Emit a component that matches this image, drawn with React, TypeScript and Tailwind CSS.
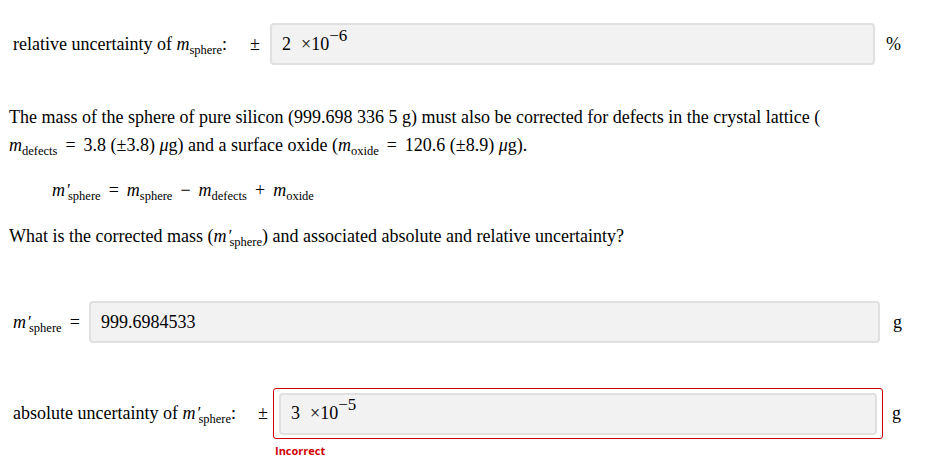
import React from 'react';

function M({ sub, prime }: { sub: string; prime?: boolean }) {
  return (
    <span className="whitespace-nowrap">
      <span className="italic">m</span>
      {prime && <span className="inline-block w-[3px] relative -top-[1px] left-[1px] text-[17px] italic">′</span>}
      <sub className="text-[12.5px] relative top-[4px]">{sub}</sub>
    </span>
  );
}

function Op({ c }: { c: string }) {
  return <span className="mx-[8px]">{c}</span>;
}

function Sci({ n, e }: { n: string; e: string }) {
  return (
    <span className="text-[18px]">
      {n}
      <span className="ml-[10px]">×10</span>
      <sup className="text-[17px] relative -top-[9px]">−{e}</sup>
    </span>
  );
}

function Box({ children, w }: { children: React.ReactNode; w: string }) {
  return (
    <div className={`${w} h-[42px] bg-[#f2f2f2] border-2 border-[#e0e0e0] rounded-[4px] flex items-center pl-[10px]`}>
      {children}
    </div>
  );
}

export default function App() {
  return (
    <div className="w-[925px] h-[457px] bg-white text-black font-['Liberation_Serif',serif] text-[18px] overflow-hidden">
      <div className="flex items-center pt-[23px] pl-[13px]">
        <span className="w-[237px]">
          relative uncertainty of <M sub="sphere" />:
        </span>
        <span className="w-[20px]">±</span>
        <Box w="w-[605px]">
          <Sci n="2" e="6" />
        </Box>
        <span className="ml-[11px]">%</span>
      </div>

      <div className="pl-[9px] mt-[38px] leading-[28px]">
        <div className="whitespace-nowrap">The mass of the sphere of pure silicon (999.698 336 5 g) must also be corrected for defects in the crystal lattice (</div>
        <div>
          <M sub="defects" />
          <Op c="=" />3.8 (±3.8) <span className="italic">μ</span>g) and a surface oxide (<M sub="oxide" />
          <Op c="=" />120.6 (±8.9) <span className="italic">μ</span>g).
        </div>
        <div className="pl-[43px] mt-[17px]">
          <M sub="sphere" prime />
          <Op c="=" />
          <M sub="sphere" />
          <Op c="−" />
          <M sub="defects" />
          <Op c="+" />
          <M sub="oxide" />
        </div>
        <div className="mt-[17px]">
          What is the corrected mass (<M sub="sphere" prime />) and associated absolute and relative uncertainty?
        </div>
      </div>

      <div className="flex items-center pl-[13px] mt-[50px]">
        <span className="w-[76px]">
          <M sub="sphere" prime />
          <Op c="=" />
        </span>
        <Box w="w-[791px]">
          <span>999.6984533</span>
        </Box>
        <span className="ml-[13px]">g</span>
      </div>

      <div className="flex items-center pl-[13px] mt-[45px]">
        <span className="w-[245px]">
          absolute uncertainty of <M sub="sphere" prime />:
        </span>
        <span className="w-[15px]">±</span>
        <div className="w-[610px] h-[51px] border border-[#d00000] rounded-[3px] flex items-center px-[5px]">
          <Box w="w-full">
            <Sci n="3" e="5" />
          </Box>
        </div>
        <span className="ml-[9px]">g</span>
      </div>
      <div className="pl-[275px] mt-[6px] leading-[12px] font-['Open_Sans',sans-serif] font-bold text-[11px] text-[#d00000]">
        Incorrect
      </div>
    </div>
  );
}
